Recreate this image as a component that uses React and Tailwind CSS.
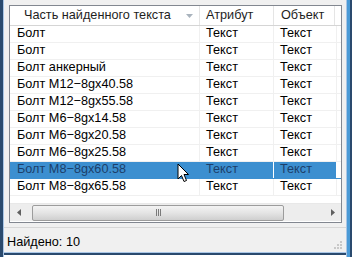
import React from "react";

const rows = [
  "Болт",
  "Болт",
  "Болт анкерный",
  "Болт M12−8gx40.58",
  "Болт M12−8gx55.58",
  "Болт M6−8gx14.58",
  "Болт M6−8gx20.58",
  "Болт M6−8gx25.58",
  "Болт M8−8gx60.58",
  "Болт M8−8gx65.58",
];

export default function App() {
  return (
    <div
      className="relative w-[352px] h-[257px] bg-[#f0f0f0] overflow-hidden flex"
      style={{ fontFamily: '"Liberation Sans", Arial, sans-serif' }}
    >
      {/* left frame */}
      <div className="w-[4px] h-full flex">
        <div className="w-[3px] bg-[#2a4a6e]" />
        <div className="w-[1px] bg-[#a9c6e6]" />
      </div>
      <div className="flex-1 flex flex-col">
        <div className="flex-1 flex flex-col pl-[5px] pr-[4px] pt-[5px]">
          {/* list panel */}
          <div className="w-[333px] h-[218px] border border-[#828790] bg-white flex flex-col">
            {/* header */}
            <div className="flex h-[20px] border-b border-[#d5d5d5] text-[12.7px] text-[#1e1e1e]">
              <div className="w-[190px] border-r border-[#e5e5e5] flex items-center relative">
                <span className="ml-[14px]">Часть найденного текста</span>
                <svg className="absolute left-[176px] top-[8px]" width="7" height="4" viewBox="0 0 7 4">
                  <path d="M0 0 L7 0 L3.5 4 Z" fill="#a9b3bd" />
                </svg>
              </div>
              <div className="w-[74px] border-r border-[#e5e5e5] flex items-center">
                <span className="ml-[6px]">Атрибут</span>
              </div>
              <div className="w-[61px] border-r border-[#e5e5e5] flex items-center">
                <span className="ml-[7px]">Объект</span>
              </div>
              <div className="flex-1" />
            </div>
            {/* rows */}
            <div className="flex flex-col text-[12.7px] text-black">
              {rows.map((r, i) => {
                const sel = i === 8;
                return (
                  <div
                    key={i}
                    className={
                      "flex h-[17px] border-b " +
                      (sel ? "border-[#3c8fd0] bg-[#3c8fd0] text-[#1d3f6b]" : "border-[#f0f0f0]")
                    }
                  >
                    <div className={"w-[190px] flex items-center border-r " + (sel ? "border-[#3c8fd0]" : "border-[#f0f0f0]")}>
                      <span className="ml-[7px]">{r}</span>
                    </div>
                    <div className={"w-[74px] flex items-center border-r " + (sel ? "border-white" : "border-[#f0f0f0]")}>
                      <span className="ml-[6px]">Текст</span>
                    </div>
                    <div className={"w-[63px] flex items-center border-r " + (sel ? "border-white" : "border-[#f0f0f0]")}>
                      <span className="ml-[6px]">Текст</span>
                    </div>
                    <div className={"flex-1 " + (sel ? "bg-white" : "")} />
                  </div>
                );
              })}
            </div>
            <div className="flex-1" />
            {/* horizontal scrollbar */}
            <div className="h-[18px] flex bg-[#ededed] border-t border-[#e8e8e8] items-center mb-[1px]">
              <div className="w-[17px] flex items-center justify-center">
                <svg width="4" height="7" viewBox="0 0 4 7">
                  <path d="M4 0 L0 3.5 L4 7 Z" fill="#606060" />
                </svg>
              </div>
              <div className="w-[5px]" />
              <div className="w-[252px] h-[16px] rounded-[2px] border border-[#9c9c9c] bg-gradient-to-b from-[#f3f3f3] via-[#e4e4e4] to-[#cfcfcf] flex items-center justify-center">
                <div className="flex gap-[1px]">
                  <div className="w-[1px] h-[7px] bg-[#7a7a7a]" />
                  <div className="w-[1px] h-[7px] bg-[#7a7a7a]" />
                  <div className="w-[1px] h-[7px] bg-[#7a7a7a]" />
                </div>
              </div>
              <div className="flex-1" />
              <div className="w-[17px] flex items-center justify-center">
                <svg width="4" height="7" viewBox="0 0 4 7">
                  <path d="M0 0 L4 3.5 L0 7 Z" fill="#606060" />
                </svg>
              </div>
            </div>
          </div>
        </div>
        {/* status bar */}
        <div className="h-[27px] mt-[4px] border-t border-[#d7d7d7] flex items-center relative pt-[5px]">
          <span className="ml-[3px] text-[12.7px] text-black">Найдено: 10</span>
          <svg className="absolute right-[4px] bottom-[3px]" width="10" height="10" viewBox="0 0 10 10">
            {[[8, 2], [8, 5], [5, 5], [8, 8], [5, 8], [2, 8]].map(([x, y], k) => (
              <rect key={k} x={x} y={y} width="2" height="2" fill="#c8c8c8" />
            ))}
          </svg>
        </div>
        {/* bottom frame */}
        <div className="h-[6px] flex flex-col">
          <div className="h-[1px] bg-[#a9c6e6]" />
          <div className="h-[2px] bg-[#2a4a6e]" />
          <div className="flex-1 bg-[#ffffff]" />
        </div>
      </div>
      {/* right frame */}
      <div className="w-[6px] h-full flex">
        <div className="w-[1px] bg-[#a9c6e6]" />
        <div className="w-[3px] bg-[#4a9ad6]" />
        <div className="w-[2px] bg-[#2a4a6e]" />
      </div>
      {/* mouse cursor */}
      <svg className="absolute left-[177px] top-[163px]" width="13" height="20" viewBox="0 0 13 20">
        <path d="M1 1 L1 16 L4.5 12.5 L7 18.5 L9.5 17.5 L7 11.5 L11.5 11.5 Z" fill="white" stroke="black" strokeWidth="1" strokeLinejoin="miter" />
      </svg>
    </div>
  );
}
